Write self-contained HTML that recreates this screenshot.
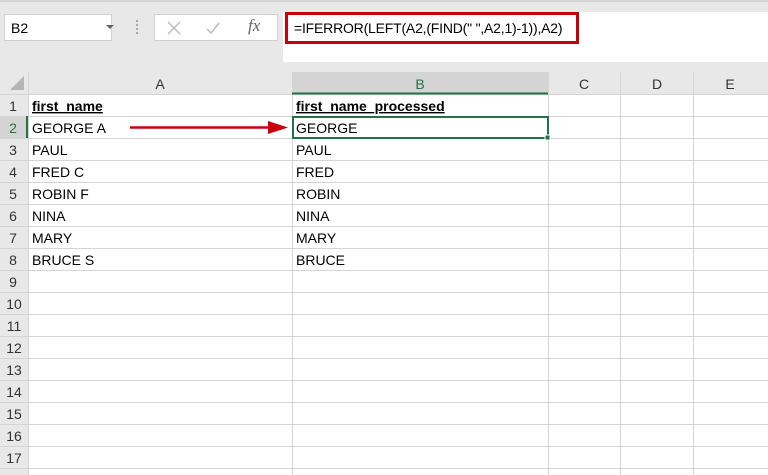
<!DOCTYPE html>
<html><head><style>
body{margin:0;width:768px;height:475px;overflow:hidden;background:#fff;font-family:"Liberation Sans",sans-serif;position:relative}
.a{position:absolute}
.grid{position:absolute;left:0;top:72px;width:768px;height:403px}
.t{font-size:14px;color:#000;position:absolute}
</style></head><body>
<div class="a" style="left:0;top:0;width:768px;height:72px;background:#e8e8e8"></div>
<div class="a" style="left:0;top:0;width:768px;height:2px;background:#d4d4d4"></div>
<div class="a" style="left:4px;top:14px;width:108px;height:27px;background:#fff;border:1px solid #d0d0d0;box-sizing:border-box"></div>
<div class="t" style="left:11px;top:20px;font-size:14px">B2</div>
<div class="a" style="left:106px;top:25px;width:0;height:0;border-left:4px solid transparent;border-right:4px solid transparent;border-top:4px solid #666"></div>
<div class="a" style="left:136px;top:20px;width:2px;height:14px;border-left:2px dotted #aaa"></div>
<div class="a" style="left:154px;top:14px;width:124px;height:27px;background:#fff;border:1px solid #d0d0d0;box-sizing:border-box"></div>
<svg class="a" style="left:166px;top:20px" width="16" height="16"><path d="M2 2L14 14M14 2L2 14" stroke="#bbb" stroke-width="1.5"/></svg>
<svg class="a" style="left:205px;top:20px" width="16" height="16"><path d="M2 9L6 13L14 3" stroke="#bbb" stroke-width="1.5" fill="none"/></svg>
<div class="a" style="left:248px;top:16px;font-family:'Liberation Serif',serif;font-style:italic;font-size:17px;color:#666">fx</div>
<div class="a" style="left:283px;top:12px;width:485px;height:50px;background:#fff"></div>
<div class="a" style="left:285px;top:12px;width:294px;height:32px;border:3px solid #c8000a;box-sizing:border-box"></div>
<div class="t" style="left:294px;top:20px;font-size:14px;letter-spacing:-0.2px">=IFERROR(LEFT(A2,(FIND(" ",A2,1)-1)),A2)</div>
<svg class="grid" width="768" height="403">
<rect x="0" y="0" width="768" height="22" fill="#e8e8e8"/>
<rect x="0" y="0" width="28" height="403" fill="#e8e8e8"/>
<rect x="292" y="0" width="256" height="22" fill="#d4d4d4"/>
<rect x="0" y="44" width="28" height="22" fill="#d4d4d4"/>
<path d="M24 4L24 18L10 18Z" fill="#b5b5b5"/>
<g stroke="#d4d4d4" stroke-width="1">
<line x1="28.5" y1="0" x2="28.5" y2="403"/><line x1="292.5" y1="0" x2="292.5" y2="403"/><line x1="548.5" y1="0" x2="548.5" y2="403"/><line x1="620.5" y1="0" x2="620.5" y2="403"/><line x1="693.5" y1="0" x2="693.5" y2="403"/>
<line x1="0" y1="22.5" x2="768" y2="22.5"/><line x1="0" y1="44.5" x2="768" y2="44.5"/><line x1="0" y1="66.5" x2="768" y2="66.5"/><line x1="0" y1="88.5" x2="768" y2="88.5"/><line x1="0" y1="110.5" x2="768" y2="110.5"/><line x1="0" y1="132.5" x2="768" y2="132.5"/><line x1="0" y1="154.5" x2="768" y2="154.5"/><line x1="0" y1="176.5" x2="768" y2="176.5"/><line x1="0" y1="198.5" x2="768" y2="198.5"/><line x1="0" y1="220.5" x2="768" y2="220.5"/><line x1="0" y1="242.5" x2="768" y2="242.5"/><line x1="0" y1="264.5" x2="768" y2="264.5"/><line x1="0" y1="286.5" x2="768" y2="286.5"/><line x1="0" y1="308.5" x2="768" y2="308.5"/><line x1="0" y1="330.5" x2="768" y2="330.5"/><line x1="0" y1="352.5" x2="768" y2="352.5"/><line x1="0" y1="374.5" x2="768" y2="374.5"/><line x1="0" y1="396.5" x2="768" y2="396.5"/>
</g>
<line x1="292" y1="21.5" x2="548" y2="21.5" stroke="#217346" stroke-width="2"/>
<line x1="27" y1="44" x2="27" y2="66" stroke="#217346" stroke-width="2"/>
<rect x="293" y="45" width="255" height="21" fill="none" stroke="#217346" stroke-width="2"/>
<rect x="545" y="63" width="5" height="5" fill="#217346" stroke="#fff" stroke-width="1"/>
<line x1="130" y1="55.5" x2="272" y2="55.5" stroke="#c8000a" stroke-width="2.5"/>
<path d="M268 49L288 55.5L268 62Z" fill="#c8000a"/>
<g font-family="Liberation Sans" font-size="14" fill="#333">
<text x="160" y="17" text-anchor="middle">A</text><text x="420" y="17" text-anchor="middle" fill="#217346">B</text><text x="584" y="17" text-anchor="middle">C</text><text x="657" y="17" text-anchor="middle">D</text><text x="730" y="17" text-anchor="middle">E</text>
<g text-anchor="middle">
<text x="13" y="39">1</text><text x="13" y="61" fill="#217346">2</text><text x="13" y="83">3</text><text x="13" y="105">4</text><text x="13" y="127">5</text><text x="13" y="149">6</text><text x="13" y="171">7</text><text x="13" y="193">8</text><text x="13" y="215">9</text><text x="14" y="237">10</text><text x="14" y="259">11</text><text x="14" y="281">12</text><text x="14" y="303">13</text><text x="14" y="325">14</text><text x="14" y="347">15</text><text x="14" y="369">16</text><text x="14" y="391">17</text><text x="14" y="413">18</text>
</g>
</g>
<g font-family="Liberation Sans" font-size="14" fill="#000">
<text x="32" y="39" font-weight="bold" text-decoration="underline">first_name</text>
<text x="296" y="39" font-weight="bold" text-decoration="underline">first_name_processed</text>
<text x="32" y="61">GEORGE A</text><text x="296" y="61">GEORGE</text>
<text x="32" y="83">PAUL</text><text x="296" y="83">PAUL</text>
<text x="32" y="105">FRED C</text><text x="296" y="105">FRED</text>
<text x="32" y="127">ROBIN F</text><text x="296" y="127">ROBIN</text>
<text x="32" y="149">NINA</text><text x="296" y="149">NINA</text>
<text x="32" y="171">MARY</text><text x="296" y="171">MARY</text>
<text x="32" y="193">BRUCE S</text><text x="296" y="193">BRUCE</text>
</g>
</svg>
</body></html>
